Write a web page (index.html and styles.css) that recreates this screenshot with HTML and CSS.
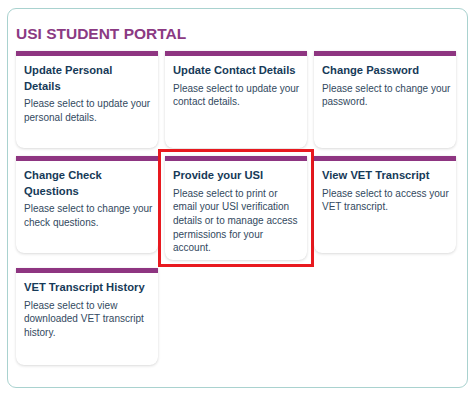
FILE: index.html
```html
<!DOCTYPE html>
<html lang="en">
<head>
<meta charset="utf-8">
<title>USI Student Portal</title>
<link rel="stylesheet" href="styles.css">
</head>
<body>
<div class="portal">
  <h1 class="portal-title">USI STUDENT PORTAL</h1>
  <div class="tiles">
    <div class="tile">
      <h2 class="tile-title">Update Personal Details</h2>
      <p class="tile-text">Please select to update your personal details.</p>
    </div>
    <div class="tile">
      <h2 class="tile-title">Update Contact Details</h2>
      <p class="tile-text">Please select to update your contact details.</p>
    </div>
    <div class="tile">
      <h2 class="tile-title">Change Password</h2>
      <p class="tile-text">Please select to change your password.</p>
    </div>
    <div class="tile">
      <h2 class="tile-title">Change Check Questions</h2>
      <p class="tile-text">Please select to change your check questions.</p>
    </div>
    <div class="tile tile-highlight">
      <h2 class="tile-title">Provide your USI</h2>
      <p class="tile-text">Please select to print or email your USI verification details or to manage access permissions for your account.</p>
    </div>
    <div class="tile">
      <h2 class="tile-title">View VET Transcript</h2>
      <p class="tile-text">Please select to access your VET transcript.</p>
    </div>
    <div class="tile">
      <h2 class="tile-title">VET Transcript History</h2>
      <p class="tile-text">Please select to view downloaded VET transcript history.</p>
    </div>
  </div>
</div>
</body>
</html>
```

FILE: styles.css
```css
html, body {
  margin: 0;
  padding: 0;
  background: #ffffff;
}

body {
  font-family: "Liberation Sans", Arial, sans-serif;
}

.portal {
  box-sizing: border-box;
  width: 461px;
  height: 380px;
  margin: 8px 0 0 7px;
  padding: 16px 13px 0 8px;
  border: 1px solid #a9d2cf;
  border-radius: 9px;
}

.portal-title {
  margin: 0 0 8px 0;
  font-size: 15.5px;
  line-height: 18px;
  font-weight: 700;
  color: #8b3a83;
}

.tiles {
  display: grid;
  grid-template-columns: repeat(3, 142px);
  column-gap: 7px;
  row-gap: 8px;
  align-items: start;
}

.tile {
  position: relative;
  box-sizing: border-box;
  min-height: 97px;
  padding: 7px 4px 5px 8px;
  border-top: 5px solid #8e3581;
  border-radius: 0 0 8px 8px;
  background: #ffffff;
  box-shadow: 0 1px 3px rgba(0, 0, 0, 0.14), 0 0 1px rgba(0, 0, 0, 0.08);
}

.tile-highlight::after {
  content: "";
  position: absolute;
  left: -7px;
  right: -7px;
  top: -12px;
  bottom: -7px;
  border: 3px solid #e8191f;
  pointer-events: none;
}

.tile-title {
  margin: 0 0 3px 0;
  padding-right: 5px;
  font-size: 11.2px;
  line-height: 15.5px;
  font-weight: 700;
  color: #163a58;
}

.tile-text {
  margin: 0;
  font-size: 10px;
  line-height: 13.7px;
  font-weight: 400;
  color: #324960;
}
```
